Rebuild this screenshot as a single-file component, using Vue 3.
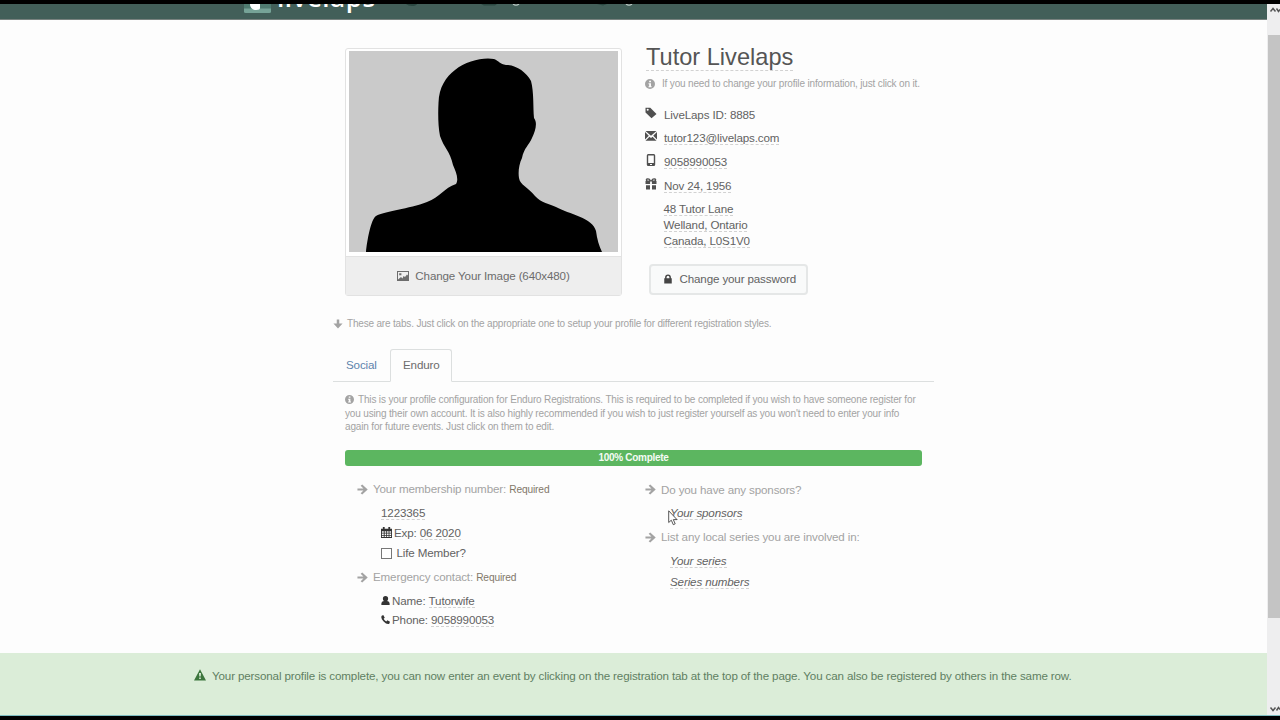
<template>
  <div id="screen">
    <div class="viewport">
      <div class="page">
        <nav class="navbar">
          <span class="logo-mark">
            <svg width="28" height="10" viewBox="0 0 28 10">
              <rect y="0" width="27" height="9" rx="1.5" fill="#76a397" />
              <rect x="0" y="0" width="27" height="4.500" fill="#4f7b70" />
              <path d="M6 0C6 4 9 6 12 6C15 6 16 5 16 4V0Z" fill="#fff" />
            </svg>
          </span>
          <span class="brand">livelaps</span>
          <span class="nav-marks">
            <svg width="236" height="4" viewBox="0 0 236 4">
              <path d="M3 0H14Q13 2 9 2T3 0M78 0H94L92 1.6H81ZM194 0H204L200 1.4Z" fill="#2b4842" />
              <path d="M110 0Q113 2.4 116 0M223 0Q226 2.4 229 0" fill="none" stroke="#bccac6" stroke-width="1.3" />
            </svg>
          </span>
        </nav>

        <main class="content">
          <section class="profile">
            <div class="photo-card">
              <div class="photo">
                <svg width="269" height="201" viewBox="0 0 269 201">
                  <path d="M17 201C18 190 22 168 27 165C36 160 60 158 78 151C91 146 95 137 107 133C110 128 107 121 104 114C101 100 95 97 91 85C89 75 89 62 89.500 52C90 36 97 26 106 19C117 10 134 6 145 8C150 10 151 13 157 14C167 14 177 21 182 30C185 41 184 56 185 67C189 72 186 81 183 87C180 94 175 97 173 107C170 113 169 121 170 127C171 134 179 136 186 145C192 152 201 153 207 156C220 163 244 167 247 180C248 188 250 195 253 201Z" fill="#000" />
                </svg>
              </div>
              <div class="photo-footer">
                <Glyph name="image" :size="12" />
                <span>Change Your Image (640x480)</span>
              </div>
            </div>

            <div class="details">
              <h1><a class="editable">{{ profile.name }}</a></h1>
              <p class="hint name-hint">
                <Glyph name="info" :size="10" />
                <span>If you need to change your profile information, just click on it.</span>
              </p>
              <ul class="facts">
                <li v-for="fact in facts" :key="fact.icon">
                  <Glyph :name="fact.icon" :size="12" />
                  <a :class="{ editable: fact.editable }">{{ fact.text }}</a>
                </li>
              </ul>
              <address>
                <div v-for="line in profile.address" :key="line"><a class="editable">{{ line }}</a></div>
              </address>
              <button class="btn-password" type="button">
                <Glyph name="lock" :size="10" />
                <span>Change your password</span>
              </button>
            </div>
          </section>

          <p class="hint tabs-hint">
            <Glyph name="down" :size="10" />
            <span>These are tabs. Just click on the appropriate one to setup your profile for different registration styles.</span>
          </p>

          <ul class="tabs">
            <li v-for="tab in tabs" :key="tab" :class="{ active: tab === activeTab }" @click="activeTab = tab">{{ tab }}</li>
          </ul>

          <section class="tab-pane">
            <p class="hint pane-hint">
              <Glyph name="info" :size="9" />
              <span class="first-line">This is your profile configuration for Enduro Registrations. This is required to be completed if you wish to have someone register for</span><br>
              you using their own account. It is also highly recommended if you wish to just register yourself as you won't need to enter your info<br>
              again for future events. Just click on them to edit.
            </p>

            <div class="progress">
              <div class="progress-bar" :style="{ width: complete + '%' }">{{ complete }}% Complete</div>
            </div>

            <div class="columns">
              <div class="column">
                <div class="question"><Glyph name="right" :size="11" /><span>Your membership number: <b>Required</b></span></div>
                <div class="answer first"><a class="editable">1223365</a></div>
                <div class="answer expiry"><Glyph name="calendar" :size="11" /> <span>Exp: <a class="editable">06 2020</a></span></div>
                <label class="answer life"><input type="checkbox"> <span>Life Member?</span></label>
                <div class="question emergency"><Glyph name="right" :size="11" /><span>Emergency contact: <b>Required</b></span></div>
                <div class="answer first"><Glyph name="user" :size="9" /> <span>Name: <a class="editable">Tutorwife</a></span></div>
                <div class="answer phone"><Glyph name="phone" :size="9" /> <span>Phone: <a class="editable">9058990053</a></span></div>
              </div>
              <div class="column right">
                <div class="question"><Glyph name="right" :size="11" /><span>Do you have any sponsors?</span></div>
                <div class="answer first"><a class="editable empty">Your sponsors</a></div>
                <div class="question series"><Glyph name="right" :size="11" /><span>List any local series you are involved in:</span></div>
                <div class="answer first"><a class="editable empty">Your series</a></div>
                <div class="answer numbers"><a class="editable empty">Series numbers</a></div>
              </div>
            </div>
          </section>
        </main>

        <footer class="alert">
          <Glyph name="warning" :size="12" />
          <span>Your personal profile is complete, you can now enter an event by clicking on the registration tab at the top of the page. You can also be registered by others in the same row.</span>
        </footer>
      </div>

      <div class="scrollbar">
        <svg class="arrows" width="13" height="12" viewBox="0 0 13 12">
          <path d="M3.500 7.500L6 4.500L8.500 7.500M9.500 4.500L11.500 7.500L13 5.500" />
        </svg>
        <div class="thumb"></div>
        <svg class="arrows" width="13" height="12" viewBox="0 0 13 12">
          <path d="M3.500 4.500L6 7.500L8.500 4.500M9.500 7.500L11.500 4.500L13 6.500" />
        </svg>
      </div>
    </div>

    <svg class="cursor" width="10" height="16" viewBox="0 0 10 16">
      <path d="M.7 .8V12.500L3.300 10.200L5.300 14.700L7.200 13.800L5.300 9.600H9Z" fill="#fff" stroke="#444" stroke-width=".9" />
    </svg>
  </div>
</template>

<script setup>
import { h, ref } from 'vue'

const profile = {
  name: 'Tutor Livelaps',
  address: ['48 Tutor Lane', 'Welland, Ontario', 'Canada, L0S1V0']
}

const facts = [
  { icon: 'tag', text: 'LiveLaps ID: 8885', editable: false },
  { icon: 'mail', text: 'tutor123@livelaps.com', editable: true },
  { icon: 'mobile', text: '9058990053', editable: true },
  { icon: 'gift', text: 'Nov 24, 1956', editable: true }
]

const tabs = ['Social', 'Enduro']
const activeTab = ref('Enduro')
const complete = ref(100)

// 12x12 glyphs, filled with the current text colour
const glyphs = {
  image: 'M0 1H12V11H0ZM1 2V9.500L4 7L5.500 8.500L6.500 6L8 7L10 4.500L11 5.500V2ZM2.200 3.200H4.400V5.200H2.200Z',
  info: 'M6 0A6 6 0 1 0 6 12A6 6 0 1 0 6 0ZM5 2H7.200V3.800H5ZM4.200 5H7.200V8.800H8V10H4.200V8.800H5V6.200H4.200Z',
  tag: 'M.5 .7V5.500L6.500 11.300L11.500 7L5.300 .7ZM2.700 1.800A1 1 0 1 1 2.700 3.800A1 1 0 1 1 2.700 1.800Z',
  mail: 'M.5 1H11.500L6 5.800ZM0 2L3.800 5.700L0 9.500ZM12 2L8.200 5.700L12 9.500ZM.5 10.800L4.500 6.700L6 8L7.500 6.700L11.500 10.800Z',
  mobile: 'M3.200 0H8.800Q10.200 0 10.200 1.500V10.500Q10.200 12 8.800 12H3.200Q1.800 12 1.800 10.500V1.500Q1.800 0 3.200 0ZM3.200 1.500V9H8.800V1.500ZM5 10V11H7V10Z',
  gift: 'M1 3Q0 0 3 .3Q5 .4 6 2.400Q7 .4 9 .3Q12 0 11 3H11.500V6H6.900V3.400H5.100V6H.5V3ZM2.300 2.500H4.400Q3.600 1.200 2.500 1.500ZM9.700 2.500H7.600Q8.400 1.200 9.500 1.500ZM1 7.200H5V11.500H1ZM7 7.200H11V11.500H7Z',
  lock: 'M2.500 5V4Q2.500 .5 6 .5T9.500 4V5H10.500V11.500H1.500V5ZM4.300 5H7.700V4Q7.700 2.200 6 2.200T4.300 4Z',
  down: 'M4.500 .5H7.500V5.500H11.500L6 11.500L.5 5.500H4.500Z',
  right: 'M.5 5H7L4 2L5.700 .5L11.700 6L5.700 11.500L4 10L7 7H.5Z',
  calendar: 'M0 2H2V0H4V2H8V0H10V2H12V12H0ZM1 4.700V6.200H3V4.700ZM4 4.700V6.200H5.700V4.700ZM6.600 4.700V6.200H8.300V4.700ZM9.200 4.700V6.200H11V4.700ZM1 7.100V8.600H3V7.100ZM4 7.100V8.600H5.700V7.100ZM6.600 7.100V8.600H8.300V7.100ZM9.200 7.100V8.600H11V7.100ZM1 9.500V11H3V9.500ZM4 9.500V11H5.700V9.500ZM6.600 9.500V11H8.300V9.500ZM9.200 9.500V11H11V9.500Z',
  user: 'M6 0Q9.500 0 9.500 3.500Q9.500 5.500 8.200 6.800Q11.500 7.500 11.500 10V12H.5V10Q.5 7.500 3.800 6.800Q2.500 5.500 2.500 3.500Q2.500 0 6 0Z',
  phone: 'M1 1L3 0L5 3.500L3.500 5Q4.500 7.500 7 8.500L8.500 7L12 9L11 11.500Q8 13 3.500 8.500Q-1 4 1 1Z',
  warning: 'M6 .2L12 11.500H0ZM5 4L5.300 7.500H6.700L7 4ZM5.200 8.500V10H6.800V8.500Z'
}

const Glyph = ({ name, size }) =>
  h('svg', { class: 'glyph', width: size, height: size, viewBox: '0 0 12 12' }, [
    h('path', { d: glyphs[name], fill: 'currentColor', 'fill-rule': 'evenodd' })
  ])
Glyph.props = ['name', 'size']
</script>

<style>
body {
  background: #000;
  overflow: hidden;
}
</style>

<style scoped>
* {
  box-sizing: border-box;
}

#screen {
  position: relative;
  height: 720px;
  padding: 4px 0;
  background: #000;
  color: #626262;
  font: 11.6px/16px "Liberation Sans", Arial, sans-serif;
  letter-spacing: -0.135px;
}

p,
ul,
h1 {
  margin: 0;
  padding: 0;
  list-style: none;
}

.viewport {
  display: flex;
  height: 712px;
  border-bottom: 1px solid #7dbcc0;
}

.page {
  display: flex;
  flex-direction: column;
  width: 1267px;
  background: #fdfdfd;
}

.navbar {
  display: flex;
  flex: none;
  height: 16px;
  padding-left: 244px;
  overflow: hidden;
  background: #425f59;
  border-bottom: 1px solid #78827f;
}

.logo-mark {
  width: 33px;
}

.logo-mark svg,
.nav-marks svg {
  display: block;
}

.brand {
  width: 126px;
  margin-top: -20px;
  color: #fff;
  font: 600 26px/26px "Open Sans", sans-serif;
  letter-spacing: 0.5px;
}

.content {
  flex: none;
  width: 601px;
  height: 633px;
  margin-left: 333px;
  padding-top: 28px;
}

.glyph {
  flex: none;
}

.profile {
  display: flex;
  height: 266px;
  padding-left: 12px;
}

.photo-card {
  width: 277px;
  height: 248px;
  border: 1px solid #e2e2e2;
  border-radius: 3px;
  background: #fff;
}

.photo {
  height: 207px;
  padding: 2px 3px 3px;
}

.photo svg {
  display: block;
  background: #cacaca;
}

.photo-footer {
  display: flex;
  align-items: center;
  justify-content: center;
  gap: 6px;
  height: 39px;
  padding-bottom: 1px;
  border-top: 1px solid #e2e2e2;
  background: #eee;
  color: #6c6c6c;
}

.details {
  margin-left: 24px;
}

h1 {
  height: 28px;
  margin-top: -5px;
  color: #555;
  font-size: 23.6px;
  font-weight: normal;
  letter-spacing: 0;
  line-height: 26px;
}

.editable {
  display: inline-block;
  height: 15px;
  border-bottom: 1px dashed #d2d2d2;
  line-height: 16px;
}

h1 .editable {
  height: 28px;
  line-height: 28px;
}

.hint {
  color: #a3a3a3;
  font-size: 10px;
  letter-spacing: -0.18px;
  line-height: 13.5px;
}

.name-hint {
  display: flex;
  align-items: center;
  gap: 7px;
  margin-top: 6px;
  letter-spacing: -0.165px;
}

.name-hint .glyph {
  margin-left: -1px;
}

.facts {
  margin-top: 16px;
}

.facts li {
  display: flex;
  gap: 7px;
  height: 23.7px;
}

.facts .glyph {
  margin: 0 0 0 -1px;
  color: #505050;
}

address {
  margin: 0 0 0 17.5px;
  font-style: normal;
}

address div {
  display: flex;
  height: 15.8px;
}

.btn-password {
  display: flex;
  align-items: center;
  gap: 7px;
  width: 159px;
  height: 31px;
  margin: 15px 0 0 3px;
  padding: 0 0 0 11.5px;
  border: 2px solid #e5e7e7;
  border-radius: 4px;
  background: #f9fafa;
  color: #626262;
  font: inherit;
  letter-spacing: inherit;
  white-space: nowrap;
}

.btn-password .glyph {
  color: #444;
}

.tabs-hint {
  display: flex;
  align-items: center;
  gap: 4px;
  height: 14px;
  margin-top: 3px;
}

.tabs {
  display: flex;
  height: 33px;
  margin-top: 18px;
  border-bottom: 1px solid #dcdfdf;
}

.tabs li {
  width: 57px;
  height: 33px;
  padding: 7px 12px;
  border: 1px solid transparent;
  color: #5d83ac;
}

.tabs .active {
  width: 62px;
  border-color: #dcdfdf;
  border-bottom-color: #fdfdfd;
  border-radius: 3px 3px 0 0;
  background: #fdfdfd;
  color: #6c6c6c;
}

.tab-pane {
  padding: 11px 12px 0;
}

.pane-hint {
  letter-spacing: -0.16px;
  white-space: nowrap;
}

.pane-hint .glyph {
  vertical-align: -1px;
}

.first-line {
  margin-left: 4px;
}

.progress {
  height: 16px;
  margin-top: 16px;
  border-radius: 3px;
  overflow: hidden;
}

.progress-bar {
  background: #5cb660;
  color: #f4fbf4;
  font-size: 10px;
  font-weight: bold;
  letter-spacing: -0.3px;
  text-align: center;
}

.columns {
  display: flex;
  padding-top: 16px;
}

.column {
  width: 288px;
  padding-left: 12px;
}

.question {
  display: flex;
  align-items: center;
  gap: 5px;
  height: 16px;
  color: #a3a3a3;
  white-space: nowrap;
}

.question b {
  color: #82786a;
  font-size: 10.2px;
  font-weight: normal;
}

.answer {
  display: flex;
  gap: 2px;
  height: 16px;
  margin-left: 24px;
}

.answer .glyph {
  margin-top: 3px;
  color: #333;
}

.right .answer {
  margin-left: 25px;
}

.first {
  margin-top: 7.5px;
}

.expiry {
  margin-top: 4px;
}

.expiry .glyph {
  margin-top: 2px;
}

.life {
  gap: 4.5px;
  margin-top: 4px;
}

.life input {
  width: 11px;
  height: 11px;
  margin: 3px 0 0;
  border: 1px solid #777;
  background: #fff;
  appearance: none;
}

.emergency {
  margin-top: 8px;
}

.phone {
  margin-top: 3.5px;
}

.series {
  margin-top: 8px;
}

.numbers {
  margin-top: 5.5px;
}

.empty {
  font-style: italic;
}

.alert {
  display: flex;
  flex: 1;
  gap: 6px;
  padding: 15px 0 0 194px;
  background: #dbedd8;
  color: #607f62;
  white-space: nowrap;
}

.alert .glyph {
  margin-top: 1px;
  color: #3c763d;
}

.scrollbar {
  display: flex;
  flex-direction: column;
  align-items: center;
  justify-content: space-between;
  width: 13px;
  background: #eeeeef;
}

.arrows {
  fill: none;
  stroke: #555;
  stroke-width: 1.5;
}

.thumb {
  width: 12px;
  height: 583px;
  margin: 19px 0 auto 1px;
  background: #c4c4c4;
}

.cursor {
  position: absolute;
  left: 668px;
  top: 510px;
}
</style>
